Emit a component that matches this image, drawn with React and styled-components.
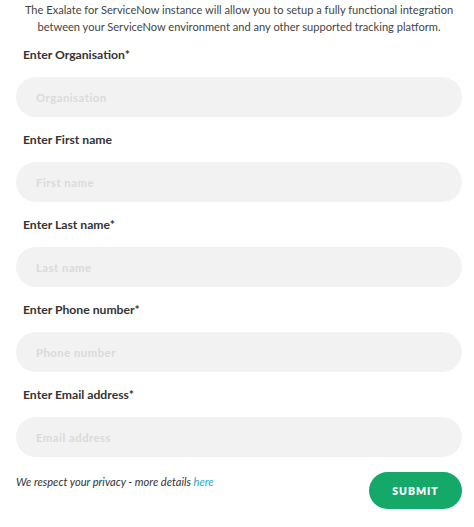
import React from "react";
import styled, { createGlobalStyle } from "styled-components";

const GlobalStyle = createGlobalStyle`
  body {
    margin: 0;
    background: #fff;
    font-family: Lato, "Open Sans", sans-serif;
  }
`;

const fields = [
  { label: "Enter Organisation*", placeholder: "Organisation" },
  { label: "Enter First name", placeholder: "First name" },
  { label: "Enter Last name*", placeholder: "Last name" },
  { label: "Enter Phone number*", placeholder: "Phone number" },
  { label: "Enter Email address*", placeholder: "Email address" },
];

const App = () => {
  return (
    <Page>
      <GlobalStyle />
      <Intro>
        The Exalate for ServiceNow instance will allow you to setup a fully functional integration
        between your ServiceNow environment and any other supported tracking platform.
      </Intro>
      <Form onSubmit={(e) => e.preventDefault()}>
        {fields.map((f) => (
          <Field key={f.label}>
            <Label>{f.label}</Label>
            <Input type="text" placeholder={f.placeholder} />
          </Field>
        ))}
        <Footer>
          <Privacy>
            We respect your privacy - more details <Link href="#">here</Link>
          </Privacy>
          <SubmitBtn type="submit">Submit</SubmitBtn>
        </Footer>
      </Form>
    </Page>
  );
};

const Page = styled.div`
  width: 446px;
  padding: 1px 12px 0 16px;
`;
const Intro = styled.p`
  margin: 0;
  font-size: 11.1px;
  line-height: 17px;
  color: #444;
  text-align: center;
`;
const Form = styled.form`
  margin-top: 11px;
  display: flex;
  flex-direction: column;
`;
const Field = styled.div`
  display: flex;
  flex-direction: column;
  gap: 13px;
  margin-bottom: 14px;
`;
const Label = styled.label`
  padding-left: 7px;
  font-size: 12.2px;
  line-height: 18px;
  font-weight: 700;
  color: #333;
`;
const Input = styled.input`
  box-sizing: border-box;
  width: 100%;
  height: 40px;
  border: none;
  border-radius: 20px;
  background: #f2f2f2;
  padding: 0 20px;
  font-family: Lato, sans-serif;
  font-size: 11.3px;
  font-weight: 700;
  color: #333;
  outline: none;
  &::placeholder {
    color: #dadada;
    letter-spacing: 0.5px;
  }
`;
const Footer = styled.div`
  display: flex;
  justify-content: space-between;
  align-items: flex-start;
  margin-top: 1px;
`;
const Privacy = styled.p`
  margin: 2px 0 0;
  font-size: 11.1px;
  line-height: 16px;
  font-style: italic;
  color: #333;
`;
const Link = styled.a`
  color: #2aa7c9;
  text-decoration: none;
`;
const SubmitBtn = styled.button`
  width: 93px;
  height: 37px;
  border: none;
  border-radius: 19px;
  background: #14a968;
  color: #fff;
  font-family: Lato, sans-serif;
  font-size: 10.5px;
  font-weight: 800;
  letter-spacing: 1px;
  text-transform: uppercase;
  cursor: pointer;
`;

export default App;
